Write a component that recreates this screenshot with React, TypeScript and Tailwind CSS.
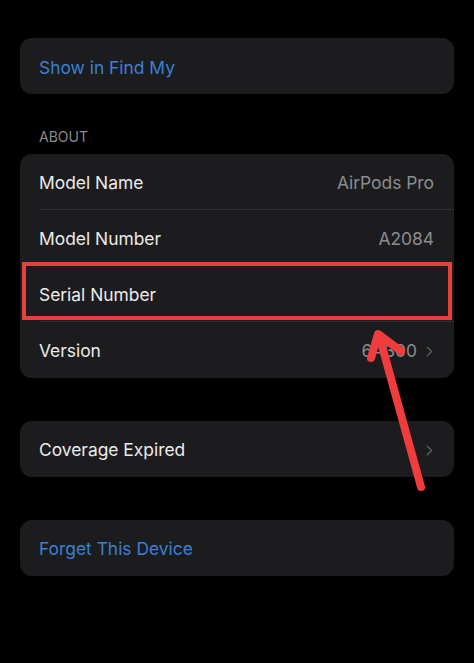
import { ChevronRight } from 'lucide-react';

type Row = { label: string; value?: string; chevron?: boolean };

const aboutRows: Row[] = [
  { label: 'Model Name', value: 'AirPods Pro' },
  { label: 'Model Number', value: 'A2084' },
  { label: 'Serial Number', value: '' },
  { label: 'Version', value: '6A300', chevron: true },
];

const Chevron = () => <ChevronRight size={17} strokeWidth={2} className="text-[#5c5c60] -mr-1 ml-1" />;

const App = () => {
  return (
    <div className="relative w-[474px] h-[663px] bg-black px-5 pt-[38px] font-['Inter','Liberation_Sans',sans-serif] text-[17.4px] overflow-hidden">
      <div className="h-14 rounded-xl bg-[#1c1c1e] flex items-center px-[19px] pt-1">
        <span className="text-[#3b80d4]">Show in Find My</span>
      </div>

      <div className="mt-[35px] mb-[9px] pl-[19px] text-[14px] leading-4 text-[#8a8a8e]">ABOUT</div>

      <div className="rounded-xl bg-[#1c1c1e]">
        {aboutRows.map((row, i) => (
          <div key={row.label} className="pl-[19px]">
            <div className={`h-14 flex items-center pr-5 pt-[3px] ${i < aboutRows.length - 1 ? 'border-b border-[#303033]' : ''}`}>
              <span className="text-[#ebebeb]">{row.label}</span>
              <span className="ml-auto text-[#8c8c90]">{row.value}</span>
              {row.chevron && <Chevron />}
            </div>
          </div>
        ))}
      </div>

      <div className="mt-[43px] h-14 rounded-xl bg-[#1c1c1e] flex items-center pl-[19px] pr-5 pt-[3px]">
        <span className="text-[#ebebeb]">Coverage Expired</span>
        <span className="ml-auto">
          <Chevron />
        </span>
      </div>

      <div className="mt-[43px] h-14 rounded-xl bg-[#1c1c1e] flex items-center px-[19px] pt-[3px]">
        <span className="text-[#3b80d4]">Forget This Device</span>
      </div>

      {/* annotation */}
      <div className="absolute left-[22px] top-[262px] w-[430px] h-[58px] border-4 border-[#e8403f]" />
      <svg className="absolute inset-0 pointer-events-none" width="474" height="663" viewBox="0 0 474 663">
        <g stroke="#f03c3c" strokeWidth="8" strokeLinecap="round" strokeLinejoin="round" fill="none">
          <path d="M421 487 L379 335" />
          <path d="M371 358 L378 334 L401 351" />
        </g>
      </svg>
    </div>
  );
};

export default App;
